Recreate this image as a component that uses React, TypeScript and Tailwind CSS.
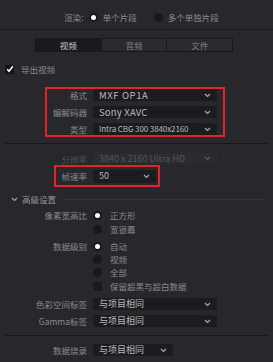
const FONT = "font-['Noto_Sans_CJK_SC','Noto_Sans',sans-serif]";

function Chevron() {
  return (
    <svg width="7" height="5" viewBox="0 0 7 5" className="shrink-0">
      <path d="M1 1l2.5 2.5L6 1" fill="none" stroke="#a8a8ac" strokeWidth="1.2" />
    </svg>
  );
}

function Select({
  value,
  width,
  disabled = false,
  h = "h-[12px]",
  text = "text-[9px]",
}: {
  value: string;
  width: string;
  disabled?: boolean;
  h?: string;
  text?: string;
}) {
  return (
    <div
      className={`${width} ${h} flex items-center justify-between gap-[2px] pl-[6px] pr-[6px] rounded-[1px] ${
        disabled ? "bg-[#2c2c30] text-[#55555a]" : "bg-[#1c1c1f] text-[#b9b9bc]"
      }`}
    >
      <span className={`${text} leading-[12px] whitespace-nowrap`}>{value}</span>
      {disabled ? <span className="opacity-40"><Chevron /></span> : <Chevron />}
    </div>
  );
}

function Radio({ on }: { on: boolean }) {
  return (
    <span className="w-[9px] h-[9px] rounded-full bg-[#19191b] flex items-center justify-center shrink-0">
      {on && <span className="w-[5px] h-[5px] rounded-full bg-white" />}
    </span>
  );
}

function Label({ children, w = "w-[87px]", dim = false }: { children: React.ReactNode; w?: string; dim?: boolean }) {
  return (
    <span className={`${w} text-right text-[8.5px] leading-[12px] whitespace-nowrap shrink-0 ${dim ? "text-[#4f4f54]" : "text-[#88888c]"}`}>
      {children}
    </span>
  );
}

function Opt({ children }: { children: React.ReactNode }) {
  return <span className="text-[8.5px] text-[#88888c] ml-[2px]">{children}</span>;
}

export default function App() {
  return (
    <div className={`w-[273px] h-[362px] bg-[#28282c] overflow-hidden ${FONT}`}>
      {/* render mode */}
      <div className="h-[30px] border-b border-[#19191b] flex items-center justify-center gap-[5px] pl-[10px] pt-[6px] text-[8.5px] text-[#88888c]">
        <span>渲染:</span>
        <Radio on />
        <span className="mr-[12px]">单个片段</span>
        <Radio on={false} />
        <span>多个单独片段</span>
      </div>

      {/* tabs */}
      <div className="mt-[8px] ml-[35px] w-[198px] h-[14px] flex border border-[#19191b] text-[8.5px]">
        <div className="flex-1 bg-[#1a1a1d] text-[#c8c8cb] flex items-center justify-center">视频</div>
        <div className="flex-1 bg-[#2b2b2f] text-[#7e7e82] flex items-center justify-center border-l border-[#19191b]">音频</div>
        <div className="flex-1 bg-[#2b2b2f] text-[#7e7e82] flex items-center justify-center border-l border-[#19191b]">文件</div>
      </div>

      {/* export video */}
      <div className="mt-[12px] ml-[5px] flex items-center gap-[7px] h-[10px]">
        <span className="w-[9px] h-[9px] bg-[#141416] flex items-center justify-center">
          <svg width="8" height="8" viewBox="0 0 8 8">
            <path d="M1.2 4.3l1.8 2L6.8 1.2" fill="none" stroke="#fff" strokeWidth="1.5" />
          </svg>
        </span>
        <span className="text-[8.5px] text-[#88888c]">导出视频</span>
      </div>

      {/* format block */}
      <div className="mt-[13px] ml-[45px] w-[180px] h-[50px] border-2 border-[#e0242a] flex flex-col gap-[5px]">
        <div className="flex items-center gap-[6px]">
          <Label w="w-[40px]">格式</Label>
          <Select value="MXF OP1A" width="w-[124px]" text="text-[9.5px] tracking-[0.6px]" />
        </div>
        <div className="flex items-center gap-[6px]">
          <Label w="w-[40px]">编解码器</Label>
          <Select value="Sony XAVC" width="w-[124px]" text="text-[9.5px] tracking-[0.2px]" />
        </div>
        <div className="flex items-center gap-[6px]">
          <Label w="w-[40px]">类型</Label>
          <Select value="Intra CBG 300 3840x2160" width="w-[124px]" text="text-[8px] tracking-[-0.1px]" />
        </div>
      </div>

      <div className="mt-[6px] mx-[5px] h-px bg-[#18181a]" />

      {/* resolution */}
      <div className="mt-[9px] flex items-center gap-[6px] h-[11px]">
        <Label dim>分辨率</Label>
        <Select value="3840 x 2160 Ultra HD" width="w-[124px]" h="h-[11px]" disabled />
      </div>

      {/* frame rate */}
      <div className="mt-[1px] ml-[54px] w-[106px] h-[22px] border-2 border-[#e0242a] flex items-center gap-[6px]">
        <Label w="w-[31px]">帧速率</Label>
        <Select value="50" width="w-[63px]" h="h-[13px]" />
      </div>

      {/* advanced */}
      <div className="mt-[7px] ml-[11px] mr-[10px] flex items-center gap-[4px] h-[10px]">
        <svg width="7" height="5" viewBox="0 0 7 5">
          <path d="M1 1l2.5 2.5L6 1" fill="none" stroke="#a0a0a4" strokeWidth="1.2" />
        </svg>
        <span className="text-[8.5px] text-[#96969a] leading-none">高级设置</span>
        <div className="flex-1 h-px bg-[#36363b] ml-[4px]" />
      </div>

      <div className="mt-[5px] flex flex-col">
        <div className="flex items-center gap-[6px] h-[12px]">
          <Label>像素宽高比</Label>
          <Radio on />
          <Opt>正方形</Opt>
        </div>
        <div className="flex items-center gap-[6px] h-[12px] mt-[2px]">
          <span className="w-[87px]" />
          <Radio on={false} />
          <Opt>宽银幕</Opt>
        </div>
        <div className="flex items-center gap-[6px] h-[12px] mt-[5px]">
          <Label>数据级别</Label>
          <Radio on />
          <Opt>自动</Opt>
        </div>
        <div className="flex items-center gap-[6px] h-[12px] mt-[1px]">
          <span className="w-[87px]" />
          <Radio on={false} />
          <Opt>视频</Opt>
        </div>
        <div className="flex items-center gap-[6px] h-[12px] mt-[1px]">
          <span className="w-[87px]" />
          <Radio on={false} />
          <Opt>全部</Opt>
        </div>
        <div className="flex items-center gap-[6px] h-[12px] mt-[2px]">
          <span className="w-[87px]" />
          <span className="w-[9px] h-[9px] bg-[#1a1a1d] shrink-0" />
          <Opt>保留超黑与超白数据</Opt>
        </div>
      </div>

      <div className="mt-[6px] flex items-center gap-[6px]">
        <Label>色彩空间标签</Label>
        <Select value="与项目相同" width="w-[124px]" />
      </div>
      <div className="mt-[5px] flex items-center gap-[6px]">
        <Label>Gamma标签</Label>
        <Select value="与项目相同" width="w-[124px]" />
      </div>

      <div className="mt-[8px] mx-[5px] h-px bg-[#18181a]" />

      <div className="mt-[8px] flex items-center gap-[6px]">
        <Label>数据烧录</Label>
        <Select value="与项目相同" width="w-[80px]" />
      </div>
    </div>
  );
}
